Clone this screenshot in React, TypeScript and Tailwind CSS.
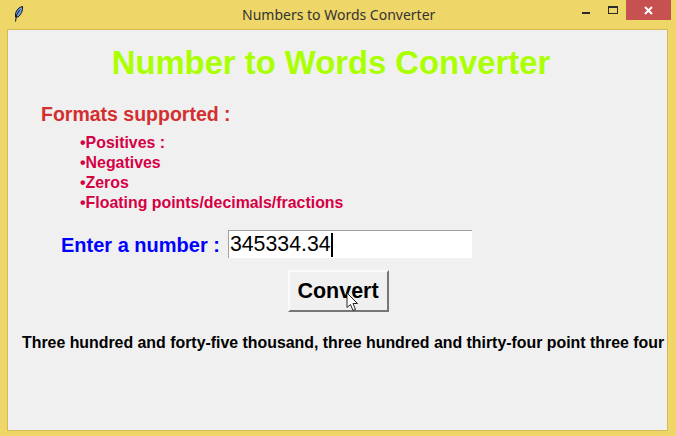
const formats = ['Positives :', 'Negatives', 'Zeros', 'Floating points/decimals/fractions'];

function Feather() {
  return (
    <svg width="10" height="16" viewBox="0 0 10 16" className="block">
      <path d="M8.5 .5C5 1 2.5 4 1.5 7.5L1.5 11L4 11C7 8.5 9 5 8.5 .5Z" fill="#6f9fe0" stroke="#10141c" strokeWidth="1" />
      <path d="M1.5 15.5L2.5 9L6 3.5" fill="none" stroke="#10141c" strokeWidth="1" />
    </svg>
  );
}

function Cursor() {
  return (
    <svg width="14" height="20" viewBox="0 0 14 20" className="absolute left-[346px] top-[292px]">
      <path d="M1 1V15.5L4.5 12.5L7 18.5L9.5 17.5L7 11.5H11.5Z" fill="#fff" stroke="#222" strokeWidth="1" />
    </svg>
  );
}

export default function App() {
  return (
    <div className="relative w-[676px] h-[436px] overflow-hidden flex flex-col bg-[#efd669] font-['Liberation_Sans',Arial,sans-serif]">
      {/* Title bar */}
      <div className="h-[29px] flex shrink-0">
        <div className="w-[38px] pl-[14px] pt-[6px]">
          <Feather />
        </div>
        <div className="flex-1 pl-[204px] text-[14px] leading-[30px] text-[#333] font-['Noto_Sans','Liberation_Sans',sans-serif]">
          Numbers to Words Converter
        </div>
        <div className="flex h-[20px] mr-[5px]">
          <div className="w-[27px] flex items-center justify-center pt-[6px]">
            <div className="w-[8px] h-[2px] bg-[#2b2b2b]" />
          </div>
          <div className="w-[27px] flex items-center justify-center">
            <div className="w-[10px] h-[8px] border border-t-2 border-[#2b2b2b]" />
          </div>
          <div className="w-[45px] bg-[#c75050] flex items-center justify-center">
            <svg width="9" height="9" viewBox="0 0 9 9">
              <path d="M1 1L8 8M8 1L1 8" stroke="#fff" strokeWidth="2" />
            </svg>
          </div>
        </div>
      </div>

      {/* Client area */}
      <div className="ml-[7px] mr-[8px] mb-[5px] h-[402px] border border-[#d4bb55] bg-[#f0f0f0] flex flex-col">
        <h1 className="mt-[14px] text-center text-[32.8px] leading-[38px] font-bold text-[#aaff00] pr-[13px]">
          Number to Words Converter
        </h1>
        <div className="mt-[21px] ml-[33px] text-[19.5px] leading-[23px] font-bold text-[#d32f2f]">Formats supported :</div>
        <ul className="mt-[7px] ml-[72px] text-[15.9px] leading-[20px] font-bold text-[#d50045]">
          {formats.map(f => (
            <li key={f}>•{f}</li>
          ))}
        </ul>
        <div className="mt-[17px] ml-[53px] flex items-center gap-[8px]">
          <span className="pt-[2px] leading-[24px] text-[20px] font-bold text-[#0000ff]">Enter a number :</span>
          <div className="w-[244px] h-[28px] bg-white border-t border-l border-[#a0a0a0] flex items-center pl-[1px] text-[21.3px] text-black">
            345334.34
            <span className="w-[2px] h-[24px] bg-black" />
          </div>
        </div>
        <div className="mt-[12px] flex justify-center pl-[1px]">
          <button className="w-[101px] h-[42px] bg-[#f0f0f0] border-2 border-t-[#fafafa] border-l-[#fafafa] border-r-[#777] border-b-[#777] text-[21.5px] font-bold text-black">
            Convert
          </button>
        </div>
        <p className="mt-[21px] pl-[14px] text-[15.88px] leading-[20px] font-bold text-black whitespace-nowrap">
          Three hundred and forty-five thousand, three hundred and thirty-four point three four
        </p>
      </div>
      <Cursor />
    </div>
  );
}
